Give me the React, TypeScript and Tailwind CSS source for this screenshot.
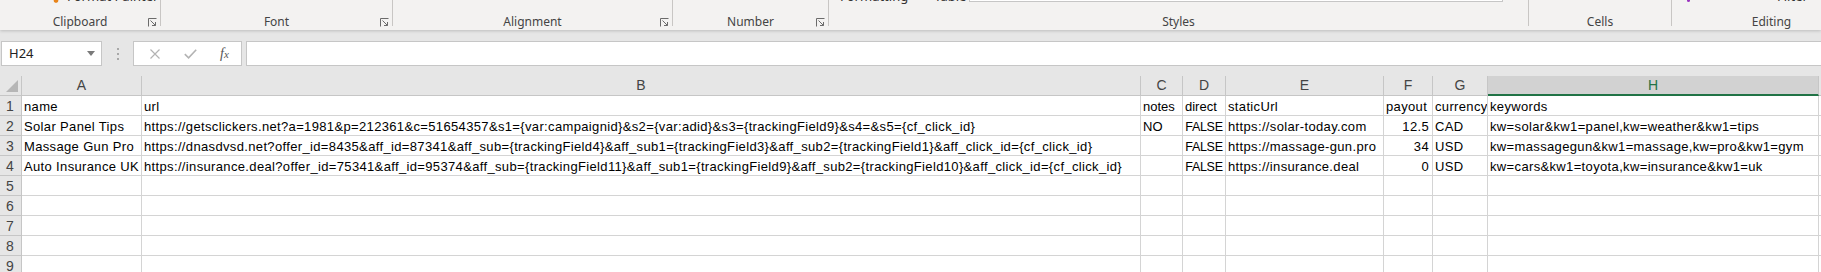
import React from 'react';

type Col = { key: string; cls: string };

const cols: Col[] = [
  { key: 'A', cls: 'w-[120px]' },
  { key: 'B', cls: 'w-[999px]' },
  { key: 'C', cls: 'w-[42px]' },
  { key: 'D', cls: 'w-[43px]' },
  { key: 'E', cls: 'w-[158px]' },
  { key: 'F', cls: 'w-[49px]' },
  { key: 'G', cls: 'w-[55px]' },
  { key: 'H', cls: 'w-[331px]' },
  { key: 'I', cls: 'w-[100px]' },
];

const rows: string[][] = [
  ['name', 'url', 'notes', 'direct', 'staticUrl', 'payout', 'currency', 'keywords', ''],
  [
    'Solar Panel Tips',
    'https://getsclickers.net?a=1981&p=212361&c=51654357&s1={var:campaignid}&s2={var:adid}&s3={trackingField9}&s4=&s5={cf_click_id}',
    'NO',
    'FALSE',
    'https://solar-today.com',
    '12.5',
    'CAD',
    'kw=solar&kw1=panel,kw=weather&kw1=tips',
    '',
  ],
  [
    'Massage Gun Pro',
    'https://dnasdvsd.net?offer_id=8435&aff_id=87341&aff_sub={trackingField4}&aff_sub1={trackingField3}&aff_sub2={trackingField1}&aff_click_id={cf_click_id}',
    '',
    'FALSE',
    'https://massage-gun.pro',
    '34',
    'USD',
    'kw=massagegun&kw1=massage,kw=pro&kw1=gym',
    '',
  ],
  [
    'Auto Insurance UK',
    'https://insurance.deal?offer_id=75341&aff_id=95374&aff_sub={trackingField11}&aff_sub1={trackingField9}&aff_sub2={trackingField10}&aff_click_id={cf_click_id}',
    '',
    'FALSE',
    'https://insurance.deal',
    '0',
    'USD',
    'kw=cars&kw1=toyota,kw=insurance&kw1=uk',
    '',
  ],
  ['', '', '', '', '', '', '', '', ''],
  ['', '', '', '', '', '', '', '', ''],
  ['', '', '', '', '', '', '', '', ''],
  ['', '', '', '', '', '', '', '', ''],
  ['', '', '', '', '', '', '', '', ''],
];

const Launcher = () => (
  <svg width="9" height="9" viewBox="0 0 9 9" fill="none" stroke="#6b6b6b" strokeWidth="1">
    <path d="M0.5 8.5V0.5H8.5" />
    <path d="M2.5 2.5L7.5 7.5M7.5 4V7.5H4" />
  </svg>
);

const Group = ({
  label,
  cls,
  launcher,
  children,
}: {
  label: string;
  cls: string;
  launcher?: boolean;
  children?: React.ReactNode;
}) => (
  <div className={`relative flex h-full shrink-0 ${cls}`}>
    <div className="flex flex-1 flex-col">
      <div className="h-[15px] overflow-hidden">{children}</div>
      <div className="flex items-center justify-center text-[12px] leading-[14px] text-[#444]">{label}</div>
    </div>
    {launcher && (
      <div className="absolute right-[4px] top-[18px]">
        <Launcher />
      </div>
    )}
    <div className="h-[26px] w-px bg-[#c8c6c4]" />
  </div>
);

export default function App() {
  return (
    <div
      className="h-[272px] w-[1821px] overflow-hidden bg-[#e6e6e6]"
      style={{ fontFamily: '"Noto Sans", "Liberation Sans", sans-serif' }}
    >
      {/* ribbon */}
      <div className="relative flex h-[30px] bg-[#f3f2f1] shadow-[0_1px_3px_rgba(0,0,0,0.18)]">
        <Group label="Clipboard" cls="w-[161px]" launcher>
          <div className="ml-[52px] mt-[-11px] flex items-end gap-[7px]">
            <svg width="8" height="14" viewBox="0 0 8 14">
              <path d="M1 8 L7 8 L6 13 L4 14 L2 13 Z" fill="#e8841a" />
            </svg>
            <span className="text-[13px] leading-[14px] text-[#333]">Format Painter</span>
          </div>
        </Group>
        <Group label="Font" cls="w-[232px]" launcher />
        <Group label="Alignment" cls="w-[280px]" launcher />
        <Group label="Number" cls="w-[156px]" launcher />
        <Group label="Styles" cls="w-[700px]">
          <div className="flex">
            <span className="ml-[11px] mt-[-11px] text-[13px] leading-[14px] text-[#333]">Formatting</span>
            <span className="ml-[26px] mt-[-11px] text-[13px] leading-[14px] text-[#333]">Table</span>
            <div className="ml-[3px] flex h-[2px] w-[547px] justify-end border-b border-l border-[#c6c6c6] bg-white">
              <div className="h-[2px] w-[14px] border-l border-[#c6c6c6] bg-[#f3f2f1]" />
            </div>
          </div>
        </Group>
        <Group label="Cells" cls="w-[143px]" />
        <Group label="Editing" cls="w-[200px]">
          <div className="flex">
            <div className="ml-[15px] mt-[-2px] h-[4px] w-[3px] rounded-full bg-[#9b34c0]" />
            <span className="ml-[87px] mt-[-11px] text-[13px] leading-[14px] text-[#333]">Filter</span>
          </div>
        </Group>
      </div>

      {/* formula bar */}
      <div className="mt-[11px] flex h-[25px] items-stretch">
        <div className="ml-[1px] flex w-[101px] items-center justify-between border border-[#c6c6c6] bg-white pl-[7px] pr-[6px]">
          <span className="text-[13px] text-[#222]">H24</span>
          <svg width="8" height="5" viewBox="0 0 8 5">
            <path d="M0 0H8L4 5Z" fill="#7a7a7a" />
          </svg>
        </div>
        <div className="flex w-[31px] flex-col items-center justify-center gap-[3px]">
          <div className="h-[2px] w-[2px] bg-[#a8a8a8]" />
          <div className="h-[2px] w-[2px] bg-[#a8a8a8]" />
          <div className="h-[2px] w-[2px] bg-[#a8a8a8]" />
        </div>
        <div className="flex w-[109px] items-center border border-[#c6c6c6] bg-white">
          <div className="flex w-[38px] justify-center pl-[4px]">
            <svg width="10" height="10" viewBox="0 0 10 10" stroke="#b3b3b3" strokeWidth="1.2">
              <path d="M0.5 0.5L9.5 9.5M9.5 0.5L0.5 9.5" />
            </svg>
          </div>
          <div className="flex w-[36px] justify-center">
            <svg width="13" height="10" viewBox="0 0 13 10" fill="none" stroke="#b3b3b3" strokeWidth="1.6">
              <path d="M0.8 5.2L4.6 8.8L12.2 0.8" />
            </svg>
          </div>
          <div className="flex w-[33px] justify-center">
            <span
              className="text-[14px] italic leading-none text-[#555]"
              style={{ fontFamily: '"Liberation Serif", serif' }}
            >
              f<span className="text-[11px]">x</span>
            </span>
          </div>
        </div>
        <div className="ml-[4px] flex-1 border border-r-0 border-[#c6c6c6] bg-white" />
      </div>

      {/* sheet */}
      <div className="mt-[10px]" style={{ fontFamily: '"Liberation Sans", Arial, sans-serif' }}>
        <div className="flex h-[20px]">
          <div className="relative w-[22px] shrink-0 border-b border-r border-[#c6c6c6]">
            <svg className="absolute bottom-[3px] right-[3px]" width="12" height="12" viewBox="0 0 12 12">
              <path d="M12 0V12H0Z" fill="#b6b6b6" />
            </svg>
          </div>
          {cols.map((c) => {
            const sel = c.key === 'H';
            return (
              <div
                key={c.key}
                className={`${c.cls} shrink-0 border-r border-[#c6c6c6] text-center text-[14px] leading-[19px] ${
                  sel
                    ? 'border-b-2 border-b-[#217346] bg-[#d2d2d2] text-[#217346]'
                    : 'border-b border-b-[#c6c6c6] text-[#444]'
                }`}
              >
                {c.key}
              </div>
            );
          })}
        </div>
        {rows.map((r, ri) => (
          <div key={ri} className="flex h-[20px]">
            <div className="w-[22px] shrink-0 border-b border-r border-[#c6c6c6] pl-[6px] pt-[2px] text-[14px] leading-[17px] text-[#444]">
              {ri + 1}
            </div>
            {cols.map((c, ci) => {
              const v = r[ci] ?? '';
              let align = 'text-left pl-[2px] text-[13px] tracking-[0.35px]';
              if (c.key === 'C' || c.key === 'D') align = 'text-left pl-[2px] text-[13px] tracking-normal';
              if (ri > 0 && c.key === 'D') align = 'text-center text-[12.5px] tracking-[-0.3px]';
              if (ri > 0 && c.key === 'F') align = 'text-right pr-[3px] text-[13px] tracking-[0.35px]';
              return (
                <div
                  key={c.key}
                  className={`${c.cls} shrink-0 overflow-hidden whitespace-nowrap border-b border-r border-[#d4d4d4] bg-white pt-[3px] leading-[16px] text-black ${align}`}
                >
                  {v}
                </div>
              );
            })}
          </div>
        ))}
      </div>
    </div>
  );
}
